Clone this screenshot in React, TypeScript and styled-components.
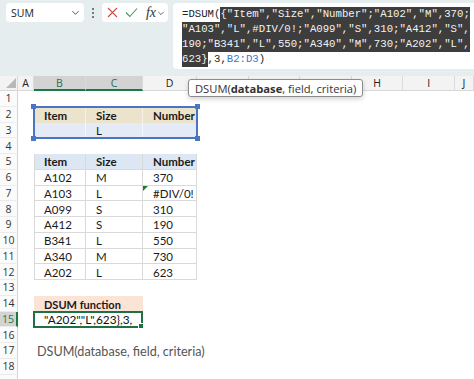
import styled, { createGlobalStyle, css } from "styled-components";

const GlobalStyle = createGlobalStyle`
  html, body {
    margin: 0;
    padding: 0;
    background: #ffffff;
  }
  body {
    font-family: "Lato", "Liberation Sans", sans-serif;
  }
`;

const Window = styled.div`
  position: relative;
  width: 474px;
  height: 379px;
  overflow: hidden;
  background: #ffffff;
`;

const TopBar = styled.div`
  height: 76px;
  box-sizing: border-box;
  padding: 3px 0 0 6px;
  background: #e6edef;
  display: flex;
  align-items: flex-start;
`;

const NameBox = styled.div`
  width: 78px;
  height: 19px;
  box-sizing: border-box;
  padding: 0 4px 0 5px;
  background: #ffffff;
  border-radius: 4px;
  display: flex;
  align-items: center;
  justify-content: space-between;
  font-family: "Open Sans", sans-serif;
  font-size: 10.5px;
  color: #222222;
`;

const Dots = styled.div`
  width: 18px;
  height: 19px;
  display: flex;
  align-items: center;
  justify-content: center;
`;

const EntryButtons = styled.div`
  width: 66px;
  height: 19px;
  box-sizing: border-box;
  padding: 0 3px 0 5px;
  background: #ffffff;
  border-radius: 4px;
  display: flex;
  align-items: center;
  justify-content: space-between;
`;

const FxLabel = styled.span`
  font-family: "Liberation Serif", serif;
  font-style: italic;
  font-size: 14px;
  color: #333333;
  display: flex;
  align-items: center;
  gap: 1px;
`;

const FormulaPanel = styled.div`
  flex: 1;
  margin-left: 5px;
  height: 66px;
  box-sizing: border-box;
  padding: 4px 0 0 9px;
  background: #ffffff;
  border-radius: 4px 0 0 4px;
  font-family: "Liberation Mono", monospace;
  font-size: 10.67px;
  color: #222222;
`;

const FormulaLine = styled.div`
  height: 15px;
  line-height: 15px;
  white-space: pre;
`;

const Mark = styled.span<{ $tone?: "sel" | "ref" }>`
  display: inline-block;
  height: 15px;
  ${(p) =>
    p.$tone === "sel" &&
    css`
      background: #3d3d3d;
      color: #f2f2f2;
    `}
  ${(p) =>
    p.$tone === "ref" &&
    css`
      color: #3b78c8;
    `}
`;

const Sheet = styled.div`
  display: grid;
  grid-template-columns: 18px 16px 52px 57px 54px repeat(5, 51.6px) 1fr;
  grid-template-rows: 15px repeat(19, 15.75px);
`;

const Corner = styled.div`
  grid-column: 1;
  grid-row: 1;
  background: #f3f3f3;
  border-right: 1px solid #d8d8d8;
  border-bottom: 1px solid #d8d8d8;
  display: flex;
  align-items: flex-end;
  justify-content: flex-end;
  padding: 0 1px 2px 0;
`;

const ColHead = styled.div<{ $col: number; $active?: boolean }>`
  grid-column: ${(p) => p.$col};
  grid-row: 1;
  box-sizing: border-box;
  display: flex;
  align-items: center;
  justify-content: center;
  font-family: "Open Sans", sans-serif;
  font-size: 10.5px;
  border-right: 1px solid #dadada;
  ${(p) =>
    p.$active
      ? css`
          background: #d3d3d3;
          color: #2f6b4b;
          border-bottom: 2px solid #1a7a45;
        `
      : css`
          background: #f3f3f3;
          color: #222222;
          border-bottom: 1px solid #d8d8d8;
        `}
`;

const RowHead = styled.div<{ $row: number; $active?: boolean }>`
  grid-column: 1;
  grid-row: ${(p) => p.$row + 1};
  box-sizing: border-box;
  display: flex;
  align-items: center;
  justify-content: center;
  font-family: "Open Sans", sans-serif;
  font-size: 10.5px;
  border-bottom: 1px solid #ebebeb;
  ${(p) =>
    p.$active
      ? css`
          background: #d3d3d3;
          color: #1a7a45;
          border-right: 2px solid #1a7a45;
        `
      : css`
          background: #fbfbfb;
          color: #333333;
          border-right: 1px solid #d4d4d4;
        `}
`;

type Kind = "critHead" | "crit" | "head" | "data" | "fnHead" | "edit" | "note";

const kindStyles: Record<Kind, ReturnType<typeof css>> = {
  critHead: css`
    background: #ece3cc;
    font-weight: 700;
    box-shadow: inset -1px 0 0 #f6f2e8;
  `,
  crit: css`
    background: #e4ebf6;
    box-shadow: inset -1px 0 0 #f3f6fb;
  `,
  head: css`
    background: #dde7f3;
    font-weight: 700;
  `,
  data: css`
    background: #ffffff;
  `,
  fnHead: css`
    background: #fbe3d6;
    font-weight: 700;
    font-size: 11px;
  `,
  edit: css`
    background: #ffffff;
    border: 2px solid #1e7145;
    margin: -1px 0 -1px -1px;
    padding-left: 9px;
    font-size: 11.8px;
    color: #111111;
  `,
  note: css`
    font-size: 12.6px;
    color: #555555;
    padding-left: 3px;
    overflow: visible;
  `,
};

const Cell = styled.div<{
  $row: number;
  $col: number;
  $span: number;
  $kind: Kind;
  $grid?: boolean;
  $first?: boolean;
}>`
  position: relative;
  grid-column: ${(p) => p.$col} / span ${(p) => p.$span};
  grid-row: ${(p) => p.$row + 1};
  box-sizing: border-box;
  display: flex;
  align-items: center;
  padding-left: 10px;
  padding-top: 1px;
  white-space: nowrap;
  font-size: 11.5px;
  color: #1a1a1a;
  ${(p) => kindStyles[p.$kind]}
  ${(p) =>
    p.$grid &&
    css`
      border-right: 1px solid #d9d9d9;
      border-bottom: 1px solid #d9d9d9;
    `}
  ${(p) =>
    p.$grid &&
    p.$first &&
    css`
      border-left: 1px solid #d9d9d9;
      padding-left: 9px;
    `}
`;

const ErrorFlag = styled.span`
  position: absolute;
  top: 0;
  left: 0;
  width: 0;
  height: 0;
  border-top: 5px solid #1e7b34;
  border-right: 5px solid transparent;
`;

const FillHandle = styled.span`
  position: absolute;
  right: -3px;
  bottom: -3px;
  width: 4px;
  height: 4px;
  background: #1e7145;
  border: 1px solid #ffffff;
`;

const Selection = styled.div`
  grid-column: 3 / span 3;
  grid-row: 3 / span 2;
  position: relative;
  margin: -1px;
  border: 2px solid #4a74c4;
  pointer-events: none;
`;

const Handle = styled.span<{ $x: "left" | "right"; $y: "top" | "bottom" }>`
  position: absolute;
  ${(p) => p.$x}: -4px;
  ${(p) => p.$y}: -4px;
  width: 5px;
  height: 5px;
  background: #4a74c4;
`;

const Tooltip = styled.div`
  position: absolute;
  left: 188px;
  top: 79px;
  height: 18px;
  box-sizing: border-box;
  padding: 0 6px 0 6px;
  background: #ffffff;
  border: 1px solid #8c8c8c;
  border-radius: 3px;
  box-shadow: 0 2px 5px rgba(0, 0, 0, 0.18);
  display: flex;
  align-items: center;
  font-family: "Open Sans", sans-serif;
  font-size: 11.2px;
  color: #333333;
  white-space: nowrap;
`;

const COLS = ["A", "B", "C", "D", "E", "F", "G", "H", "I", "J"];
// E, F and G sit under the function tooltip
const HIDDEN = ["E", "F", "G"];

interface CellSpec {
  row: number;
  col: string;
  text?: string;
  kind: Kind;
  span?: number;
  flag?: boolean;
}

const colIndex = (c: string) => COLS.indexOf(c) + 2;

const cells: CellSpec[] = [
  { row: 2, col: "B", text: "Item", kind: "critHead" },
  { row: 2, col: "C", text: "Size", kind: "critHead" },
  { row: 2, col: "D", text: "Number", kind: "critHead" },
  { row: 3, col: "B", kind: "crit" },
  { row: 3, col: "C", text: "L", kind: "crit" },
  { row: 3, col: "D", kind: "crit" },
  { row: 14, col: "B", text: "DSUM function", kind: "fnHead", span: 2 },
  { row: 15, col: "B", text: '"A202","L",623},3,', kind: "edit", span: 2 },
  { row: 17, col: "B", text: "DSUM(database, field, criteria)", kind: "note" },
];

const records = [
  ["Item", "Size", "Number"],
  ["A102", "M", "370"],
  ["A103", "L", "#DIV/0!"],
  ["A099", "S", "310"],
  ["A412", "S", "190"],
  ["B341", "L", "550"],
  ["A340", "M", "730"],
  ["A202", "L", "623"],
];

records.forEach((rec, i) => {
  rec.forEach((text, j) => {
    cells.push({
      row: 5 + i,
      col: COLS[1 + j],
      text,
      kind: i === 0 ? "head" : "data",
      flag: text === "#DIV/0!",
    });
  });
});

function ChevronDown({ size = 9 }: { size?: number }) {
  return (
    <svg width={size} height={size} viewBox="0 0 10 10">
      <path d="M1.5 3.5 L5 7 L8.5 3.5" fill="none" stroke="#555" strokeWidth="1.1" />
    </svg>
  );
}

function FormulaText() {
  return (
    <FormulaPanel>
      <FormulaLine>
        =DSUM(<Mark $tone="sel">{'{"Item","Size","Number";"A102","M",370;'}</Mark>
      </FormulaLine>
      <FormulaLine>
        <Mark $tone="sel">{'"A103","L",#DIV/0!;"A099","S",310;"A412","S",'}</Mark>
      </FormulaLine>
      <FormulaLine>
        <Mark $tone="sel">{'190;"B341","L",550;"A340","M",730;"A202","L",'}</Mark>
      </FormulaLine>
      <FormulaLine>
        <Mark $tone="sel">{"623}"}</Mark>,3,<Mark $tone="ref">B2:D3</Mark>)
      </FormulaLine>
    </FormulaPanel>
  );
}

export default function App() {
  const rows = Array.from({ length: 19 }, (_, i) => i + 1);
  return (
    <Window>
      <GlobalStyle />
      <TopBar>
        <NameBox>
          SUM
          <ChevronDown />
        </NameBox>
        <Dots>
          <svg width="4" height="12" viewBox="0 0 4 12">
            <circle cx="2" cy="2" r="1" fill="#555" />
            <circle cx="2" cy="6" r="1" fill="#555" />
            <circle cx="2" cy="10" r="1" fill="#555" />
          </svg>
        </Dots>
        <EntryButtons>
          <svg width="11" height="11" viewBox="0 0 11 11">
            <path d="M1 1 L10 10 M10 1 L1 10" stroke="#d24a43" strokeWidth="1.1" />
          </svg>
          <svg width="13" height="11" viewBox="0 0 13 11">
            <path d="M1 5.5 L4.8 9.5 L12 1.5" fill="none" stroke="#3f9a5a" strokeWidth="1.1" />
          </svg>
          <FxLabel>
            fx
            <ChevronDown size={8} />
          </FxLabel>
        </EntryButtons>
        <FormulaText />
      </TopBar>

      <Sheet>
        <Corner>
          <svg width="10" height="10" viewBox="0 0 10 10">
            <path d="M10 0 L10 10 L0 10 Z" fill="#b9b9b9" />
          </svg>
        </Corner>
        {COLS.map((c, i) => (
          <ColHead key={c} $col={i + 2} $active={c === "B" || c === "C"}>
            {HIDDEN.includes(c) ? "" : c}
          </ColHead>
        ))}
        {rows.map((r) => (
          <RowHead key={r} $row={r} $active={r === 15}>
            {r < 19 ? r : ""}
          </RowHead>
        ))}
        {cells.map((c) => (
          <Cell
            key={`${c.col}${c.row}`}
            $row={c.row}
            $col={colIndex(c.col)}
            $span={c.span ?? 1}
            $kind={c.kind}
            $grid={c.kind === "head" || c.kind === "data"}
            $first={c.col === "B"}
          >
            {c.flag && <ErrorFlag />}
            {c.text}
            {c.kind === "edit" && <FillHandle />}
          </Cell>
        ))}
        <Selection>
          <Handle $x="left" $y="top" />
          <Handle $x="right" $y="top" />
          <Handle $x="left" $y="bottom" />
          <Handle $x="right" $y="bottom" />
        </Selection>
      </Sheet>

      <Tooltip>
        DSUM(<b>database</b>, field, criteria)
      </Tooltip>
    </Window>
  );
}
